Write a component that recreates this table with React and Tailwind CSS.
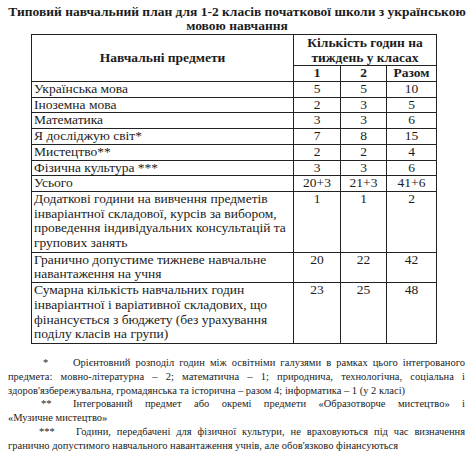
const rows = [
  { name: 'Українська мова', a: '5', b: '5', c: '10' },
  { name: 'Іноземна мова', a: '2', b: '3', c: '5' },
  { name: 'Математика', a: '3', b: '3', c: '6' },
  { name: 'Я досліджую світ*', a: '7', b: '8', c: '15' },
  { name: 'Мистецтво**', a: '2', b: '2', c: '4' },
  { name: 'Фізична культура ***', a: '3', b: '3', c: '6' },
  { name: 'Усього', a: '20+3', b: '21+3', c: '41+6' },
  {
    name: 'Додаткові години на вивчення предметів інваріантної складової, курсів за вибором, проведення індивідуальних консультацій та групових занять',
    a: '1', b: '1', c: '2', tall: true,
  },
  { name: 'Гранично допустиме тижневе навчальне навантаження на учня', a: '20', b: '22', c: '42' },
  {
    name: 'Сумарна кількість навчальних годин інваріантної і варіативної складових, що фінансується з бюджету (без урахування поділу класів на групи)',
    a: '23', b: '25', c: '48', tall: true,
  },
];

const serif = "font-['Liberation_Serif',serif]";
const cell = `${serif} border border-[#222] px-[2px] align-top text-left`;
const num = `${serif} border border-[#222] text-center align-top`;
const head = `${serif} border border-[#222] font-bold text-center`;

export default function App() {
  return (
    <div className="w-[474px] h-[456px] bg-white text-[#1c1c1c] font-['Liberation_Serif',serif] overflow-hidden">
      <h1 className={`${serif} pt-[5px] text-center font-bold text-[13.5px] leading-[14px]`}>
        Типовий навчальний план для 1-2 класів початкової школи з українською
        <br />
        мовою навчання
      </h1>

      <table className={`${serif} ml-[31px] mt-[1px] border-collapse text-[13.5px] leading-[14.7px]`}>
        <colgroup>
          <col className="w-[262px]" />
          <col className="w-[47px]" />
          <col className="w-[46px]" />
          <col className="w-[50px]" />
        </colgroup>
        <thead>
          <tr className="h-[31px]">
            <th rowSpan={2} className={`${head} align-middle`}>
              Навчальні предмети
            </th>
            <th colSpan={3} className={`${head} leading-[15px]`}>
              Кількість годин на
              <br />
              тиждень у класах
            </th>
          </tr>
          <tr className="h-[16px]">
            <th className={head}>1</th>
            <th className={head}>2</th>
            <th className={head}>Разом</th>
          </tr>
        </thead>
        <tbody>
          {rows.map((r) => (
            <tr key={r.name}>
              <td className={r.tall ? `${cell} pb-[1px]` : cell}>{r.name}</td>
              <td className={num}>{r.a}</td>
              <td className={num}>{r.b}</td>
              <td className={num}>{r.c}</td>
            </tr>
          ))}
        </tbody>
      </table>

      <div className={`${serif} mt-[12px] pl-[8px] pr-[9px] text-[10.5px] leading-[13.8px] text-justify`}>
        <p className="indent-[35px]">
          <span className="inline-block w-[30px] indent-0">*</span>
          Орієнтовний розподіл годин між освітніми галузями в рамках цього інтегрованого предмета: мовно-літературна – 2; математична – 1; природнича, технологічна, соціальна і здоров'язбережувальна, громадянська та історична – разом 4; інформатика – 1 (у 2 класі)
        </p>
        <p className="indent-[33px]">
          <span className="inline-block w-[32px] indent-0">**</span>
          Інтегрований предмет або окремі предмети «Образотворче мистецтво» і{' '}
          <span className="whitespace-nowrap">«Музичне мистецтво»</span>
        </p>
        <p className="indent-[31px]">
          <span className="inline-block w-[37px] indent-0">***</span>
          Години, передбачені для фізичної культури, не враховуються під час визначення гранично допустимого навчального навантаження учнів, але обов'язково фінансуються
        </p>
      </div>
    </div>
  );
}
